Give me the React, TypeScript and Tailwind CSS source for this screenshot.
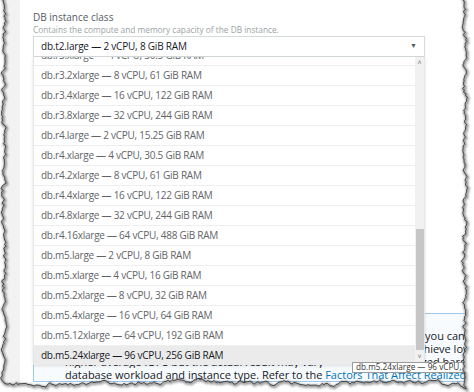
import React from "react";

const rows = [
  "db.r3.xlarge — 4 vCPU, 30.5 GiB RAM",
  "db.r3.2xlarge — 8 vCPU, 61 GiB RAM",
  "db.r3.4xlarge — 16 vCPU, 122 GiB RAM",
  "db.r3.8xlarge — 32 vCPU, 244 GiB RAM",
  "db.r4.large — 2 vCPU, 15.25 GiB RAM",
  "db.r4.xlarge — 4 vCPU, 30.5 GiB RAM",
  "db.r4.2xlarge — 8 vCPU, 61 GiB RAM",
  "db.r4.4xlarge — 16 vCPU, 122 GiB RAM",
  "db.r4.8xlarge — 32 vCPU, 244 GiB RAM",
  "db.r4.16xlarge — 64 vCPU, 488 GiB RAM",
  "db.m5.large — 2 vCPU, 8 GiB RAM",
  "db.m5.xlarge — 4 vCPU, 16 GiB RAM",
  "db.m5.2xlarge — 8 vCPU, 32 GiB RAM",
  "db.m5.4xlarge — 16 vCPU, 64 GiB RAM",
  "db.m5.12xlarge — 64 vCPU, 192 GiB RAM",
  "db.m5.24xlarge — 96 vCPU, 256 GiB RAM",
];

// seeded jitter so the torn edge is the same on every render
function rng(seed: number) {
  let s = seed;
  return () => {
    s = (s * 16807) % 2147483647;
    return s / 2147483647;
  };
}

function tornEdge() {
  const r = rng(7);
  const pts: [number, number][] = [];
  let d = 0;
  // small random walk plus fine teeth
  const step = (amp: number) => {
    d = d * 0.7 + (r() - 0.5) * amp;
    return d + (r() - 0.5) * amp * 0.6;
  };
  // left edge, top to bottom
  for (let y = -4; y < 380; y += 1.8) pts.push([3.5 + step(2.6), y]);
  // bottom edge, left to right
  d = 0;
  for (let x = 4; x < 463; x += 2) {
    const y = 382.5 + Math.sin(x / 41) * 1.5 + (x > 420 ? (x - 420) / 9 : 0) + step(2.8);
    pts.push([x, y]);
  }
  // right edge, bottom to top
  d = 0;
  for (let y = 389; y > -4; y -= 1.8) pts.push([464.5 + step(2.8), y]);
  const line = pts.map(([x, y], i) => `${i ? "L" : "M"}${x.toFixed(1)} ${y.toFixed(1)}`).join(" ");
  return {
    line,
    outside: `M-10 -10 H490 V410 H-10 Z ${line} L464 -20 L3 -20 Z`,
  };
}

const edge = tornEdge();

export default function App() {
  return (
    <div className="relative w-[474px] h-[392px] overflow-hidden bg-white font-['Open_Sans',sans-serif]">
      <div className="flex h-full">
        <div className="w-[20px] shrink-0 bg-[#f2f2f2]" />
        <div className="flex-1 pl-[13px] pt-[10px]">
          <div className="text-[10px] leading-[14px] text-[#545b64]">DB instance class</div>
          <div className="text-[8.3px] leading-[11px] text-[#9aa3a3]">
            Contains the compute and memory capacity of the DB instance.
          </div>

          <div className="relative mt-[1px] w-[392px]">
            <div className="flex h-[21px] items-center justify-between border border-[#d5dbdb] bg-white pl-[7px] pr-[7px] shadow-[0_1px_1px_rgba(0,0,0,0.08)]">
              <span className="text-[10px] tracking-[-0.2px] text-[#16191f]">db.t2.large — 2 vCPU, 8 GiB RAM</span>
              <span className="text-[7px] text-[#545b64]">▼</span>
            </div>

            {/* open option list */}
            <div className="absolute left-0 top-[21px] z-20 h-[308px] w-[392px] overflow-hidden border-x border-[#e4e7e7] bg-white shadow-[0_1px_3px_rgba(0,0,0,0.12)]">
              <div className="mt-[-12px] mr-[9px]">
                {rows.map((row, i) => {
                  const hover = i === rows.length - 1;
                  return (
                    <div
                      key={row}
                      className={`box-border flex h-[20px] items-center pl-[7px] text-[10px] tracking-[-0.25px] ${
                        i ? "border-t border-[#eef0f0]" : ""
                      } ${hover ? "bg-[#ebebeb] text-[#16191f]" : "text-[#5f6467]"}`}
                    >
                      {row}
                    </div>
                  );
                })}
              </div>
              <div className="absolute right-0 top-0 bottom-0 flex w-[9px] flex-col items-center bg-[#f1f1f1]">
                <span className="mt-[2px] text-[7px] leading-[8px] text-[#777]">˄</span>
                <div className="mt-[162px] h-[121px] w-[8px] bg-[#c6c6c6]" />
                <span className="mt-[3px] text-[7px] leading-[8px] text-[#777]">˅</span>
              </div>
            </div>
          </div>

          {/* info box partly hidden behind the list */}
          <div className="mt-[256px] w-[460px] border border-[#9fc9ec] bg-[#f7fbfe] pt-[15px] text-[11px] leading-[13px] text-[#16191f]">
            <div className="whitespace-nowrap pl-[391px]">you can reach</div>
            <div className="whitespace-nowrap pl-[378px]">achieve lower</div>
            <div className="flex whitespace-nowrap">
              <span className="w-[391px] overflow-hidden pl-[31px]">higher average IOPS but the actual result may vary</span>
              <span>X-sized hardware</span>
            </div>
            <div className="whitespace-nowrap pl-[31px]">
              database workload and instance type. Refer to the{" "}
              <span className="text-[#0073bb]">Factors That Affect Realized IOPS</span> section
            </div>
          </div>
        </div>
      </div>

      {/* native tooltip */}
      <div className="absolute left-[352px] top-[362px] z-30 flex h-[11px] items-center whitespace-nowrap border border-[#9a9a9a] bg-white px-[3px] text-[8.2px] text-[#333]">
        db.m5.24xlarge — 96 vCPU, 256 GiB RAM
      </div>

      <svg className="pointer-events-none absolute inset-0 z-40" width="474" height="392">
        <defs>
          <filter id="soft" x="-5%" y="-5%" width="110%" height="110%">
            <feGaussianBlur stdDeviation="1.1" />
          </filter>
        </defs>
        <path d={edge.outside} fill="#fff" fillRule="evenodd" />
        <path d={edge.line} fill="none" stroke="#000" strokeOpacity="0.4" strokeWidth="3" filter="url(#soft)" transform="translate(0.8 1)" />
        <path d={edge.line} fill="none" stroke="#3b3b3b" strokeWidth="0.9" />
      </svg>
    </div>
  );
}
